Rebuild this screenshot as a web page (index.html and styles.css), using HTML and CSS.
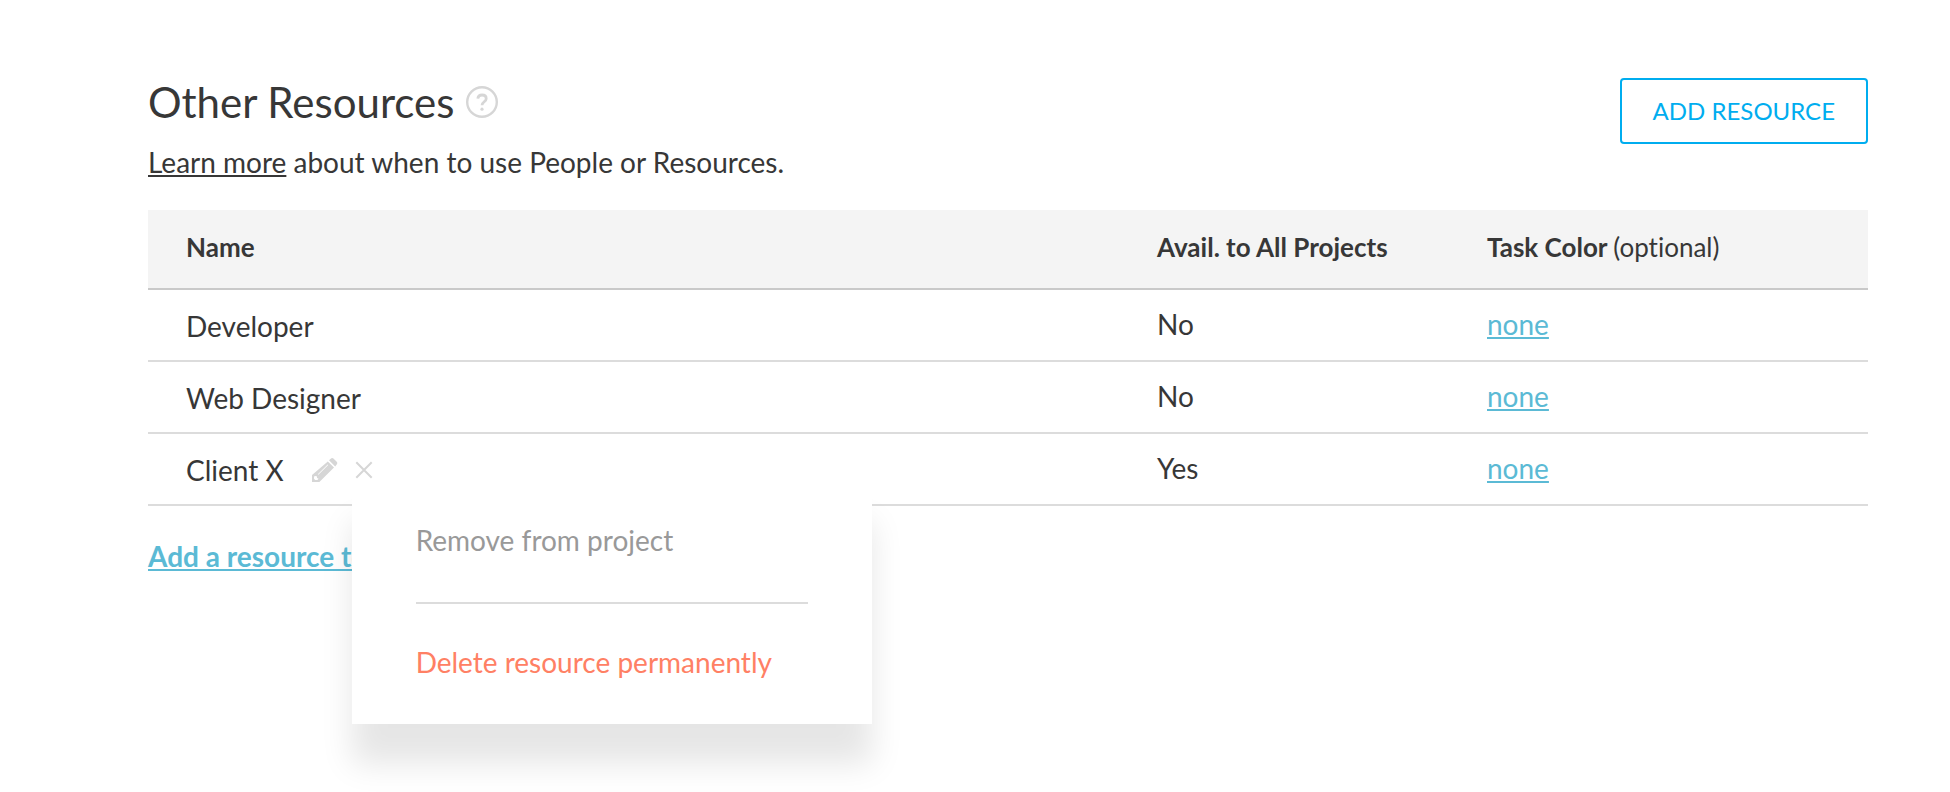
FILE: index.html
```html
<!DOCTYPE html>
<html lang="en">
<head>
<meta charset="UTF-8">
<title>Other Resources</title>
<link rel="stylesheet" href="styles.css">
</head>
<body>
<main class="page">
  <header class="page-header">
    <div>
      <div class="title">
        <h1>Other Resources</h1>
        <button type="button" class="icon-button help" aria-label="Help">
          <svg width="32" height="32" viewBox="0 0 32 32" fill="none" stroke="#d6d6d6">
            <circle cx="16" cy="16" r="14.8" stroke-width="2.4"/>
            <path d="M11.8 12.6c.3-2.3 2-3.6 4.2-3.6 2.4 0 4.2 1.4 4.2 3.7 0 3-4.2 3.2-4.2 6.6" stroke-width="2.8"/>
            <circle cx="16" cy="23.2" r="1.6" fill="#d6d6d6" stroke="none"/>
          </svg>
        </button>
      </div>
      <p class="intro"><a href="#">Learn more</a> about when to use People or Resources.</p>
    </div>
    <button type="button" class="add-button">ADD RESOURCE</button>
  </header>

  <table class="resources">
    <thead>
      <tr>
        <th class="name">Name</th>
        <th class="avail">Avail. to All Projects</th>
        <th class="color">Task Color <span>(optional)</span></th>
      </tr>
    </thead>
    <tbody>
      <tr>
        <td class="name">Developer</td>
        <td>No</td>
        <td><a href="#">none</a></td>
      </tr>
      <tr>
        <td class="name">Web Designer</td>
        <td>No</td>
        <td><a href="#">none</a></td>
      </tr>
      <tr>
        <td class="name">
          <div class="name-row">
            <span>Client X</span>
            <div class="actions">
              <button type="button" class="icon-button" aria-label="Edit">
                <svg width="26" height="24" viewBox="0 0 26 24" fill="#d6d6d6">
                  <path d="M15.8 3.4l6.2 6.2L7.4 24H0v-7zM2 18.6v2.2L3.2 22h2.2l1.2-1.2-1.5-.9-.3-1.6-1.5-.3zM15.7 6.6L5.8 16.3l.5.5 9.9-9.7z" fill-rule="evenodd"/>
                  <path d="M17 2.2L18.700.7c.9-.9 2.1-.9 3 0l3 3c.8.8.8 2 0 2.9L23.200 8.400z"/>
                </svg>
              </button>
              <div class="menu-anchor">
                <button type="button" class="icon-button" aria-label="Remove">
                  <svg width="24" height="24" viewBox="0 0 24 24" fill="none" stroke="#d6d6d6" stroke-width="2">
                    <path d="M4.3 4.3l15.4 15.4M19.7 4.3L4.3 19.7"/>
                  </svg>
                </button>
                <div class="menu">
                  <button type="button">Remove from project</button>
                  <hr>
                  <button type="button" class="danger">Delete resource permanently</button>
                </div>
              </div>
            </div>
          </div>
        </td>
        <td>Yes</td>
        <td><a href="#">none</a></td>
      </tr>
    </tbody>
  </table>

  <a href="#" class="add-link">Add a resource to</a>
</main>
</body>
</html>
```

FILE: styles.css
```css
* {
  box-sizing: border-box;
}
body {
  margin: 0;
  background-color: #fff;
  font-family: Lato, sans-serif;
  font-size: 28px;
  line-height: 36px;
  font-variant-ligatures: none;
  color: #373737;
}
button {
  font: inherit;
  background: none;
  border: 0;
  padding: 0;
  cursor: pointer;
}
a {
  color: #5bbad5;
  text-decoration: underline;
  text-decoration-thickness: 2px;
  text-underline-offset: 2px;
  text-decoration-skip-ink: none;
}

/* header */
.page {
  min-height: 100vh;
  padding: 78px 82px 78px 148px;
}
.page-header {
  display: flex;
  justify-content: space-between;
  align-items: flex-start;
  height: 132px;
}
.title {
  display: flex;
  align-items: center;
  gap: 12px;
  height: 48px;
}
h1 {
  margin: 0;
  font-size: 42px;
  line-height: 48px;
  font-weight: 400;
}
.intro {
  margin: 18px 0 0;
}
.intro a {
  color: #373737;
}
.icon-button {
  display: block;
}
.icon-button svg {
  display: block;
}
.add-button {
  height: 66px;
  padding: 0 31px;
  border: 2px solid #00adef;
  border-radius: 4px;
  font-size: 24px;
  color: #00adef;
}

/* table */
.resources {
  width: 100%;
  border-collapse: separate;
  border-spacing: 0;
  table-layout: fixed;
}
th {
  height: 80px;
  padding: 0 0 4px;
  background-color: #f4f4f4;
  border-bottom: 2px solid #c9c9c9;
  font-size: 26px;
  font-weight: 700;
  text-align: left;
}
th span {
  font-weight: 400;
}
td {
  height: 72px;
  padding: 0 0 2px;
  border-bottom: 2px solid #dcdcdc;
}
th.name, td.name {
  padding-left: 38px;
}
td.name {
  padding-top: 4px;
}
th.avail {
  width: 330px;
}
th.color {
  width: 381px;
}
.name-row {
  display: flex;
  align-items: center;
  gap: 28px;
}
.actions {
  display: flex;
  gap: 14px;
}

/* remove menu */
.menu-anchor {
  position: relative;
}
.menu {
  position: absolute;
  top: 100%;
  left: 0;
  width: 520px;
  padding: 0 64px;
  background-color: #fff;
  box-shadow: 0 40px 30px rgba(0, 0, 0, 0.1);
}
.menu button {
  display: block;
  width: 100%;
  height: 120px;
  padding-bottom: 4px;
  text-align: left;
  color: #999;
}
.menu button.danger {
  color: #ff8064;
}
.menu hr {
  height: 2px;
  margin: 0;
  border: 0;
  background-color: #dcdcdc;
}
.add-link {
  display: inline-block;
  margin-top: 32px;
  font-weight: 700;
}
```
